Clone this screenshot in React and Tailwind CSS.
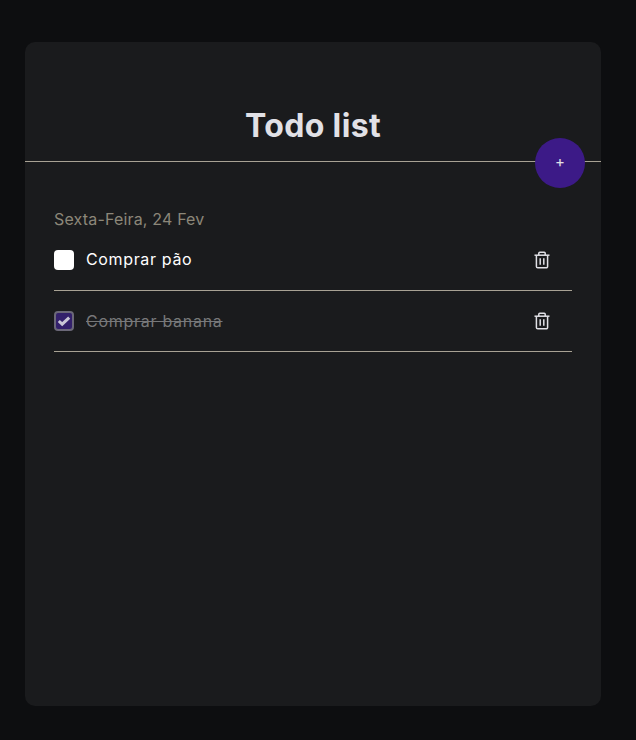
const todos = [
  { id: 1, title: 'Comprar pão', done: false },
  { id: 2, title: 'Comprar banana', done: true },
]

function TrashIcon() {
  return (
    <svg width="18" height="18" viewBox="0 0 18 18" fill="none" stroke="#e1e1e6" strokeWidth="1.5">
      <path d="M1.5 4.2h15" />
      <path d="M5.8 4V2.2a1 1 0 0 1 1-1h4.4a1 1 0 0 1 1 1V4" />
      <path d="M3.4 4.2v11.2a1.4 1.4 0 0 0 1.4 1.4h8.4a1.4 1.4 0 0 0 1.4-1.4V4.2" />
      <path d="M7.2 7.2v6.6M10.8 7.2v6.6" />
    </svg>
  )
}

function TodoItem({ todo }) {
  return (
    <li className="flex h-[61px] items-center border-b border-[#a8a294] pb-[1px]">
      {todo.done ? (
        <span className="flex h-5 w-5 items-center justify-center rounded-[4px] border-2 border-[#6b6878] bg-[#33206b]">
          <svg width="14" height="14" viewBox="0 0 14 14" fill="none" stroke="#c9c6d6" strokeWidth="3">
            <path d="M1.8 7l3.4 3.2 7-6.6" />
          </svg>
        </span>
      ) : (
        <span className="h-5 w-5 rounded-[4px] bg-white" />
      )}
      <span className={`ml-3 flex-1 text-[16px] ${todo.done ? 'tracking-[0.72px] text-[#77787a] line-through' : 'pb-[2px] tracking-[0.65px] text-white'}`}>
        {todo.title}
      </span>
      <span className="mr-[21px]">
        <TrashIcon />
      </span>
    </li>
  )
}

export default function App() {
  return (
    <div className="min-h-[740px] bg-[#0d0e10] pl-[25px] pt-[42px] font-['Inter','Liberation_Sans',sans-serif]">
      <div className="relative h-[664px] w-[576px] rounded-[10px] bg-[#1a1b1d]">
        <header className="flex h-[120px] items-end justify-center border-b border-[#a8a294] pb-[15px]">
          <h1 className="text-[32px] font-bold leading-[40px] tracking-[0.35px] text-[#e1e1e6]">Todo list</h1>
        </header>
        <button className="absolute left-[510px] top-[96px] flex h-[50px] w-[50px] items-center justify-center rounded-full bg-[#3c1a87] pb-[2px] text-[15px] text-[#e1e1e6]">
          +
        </button>
        <main className="px-[29px] pt-[46px]">
          <p className="text-[16px] leading-[22px] tracking-[0.17px] text-[#8c8779]">Sexta-Feira, 24 Fev</p>
          <ul>
            {todos.map(todo => (
              <TodoItem key={todo.id} todo={todo} />
            ))}
          </ul>
        </main>
      </div>
    </div>
  )
}
